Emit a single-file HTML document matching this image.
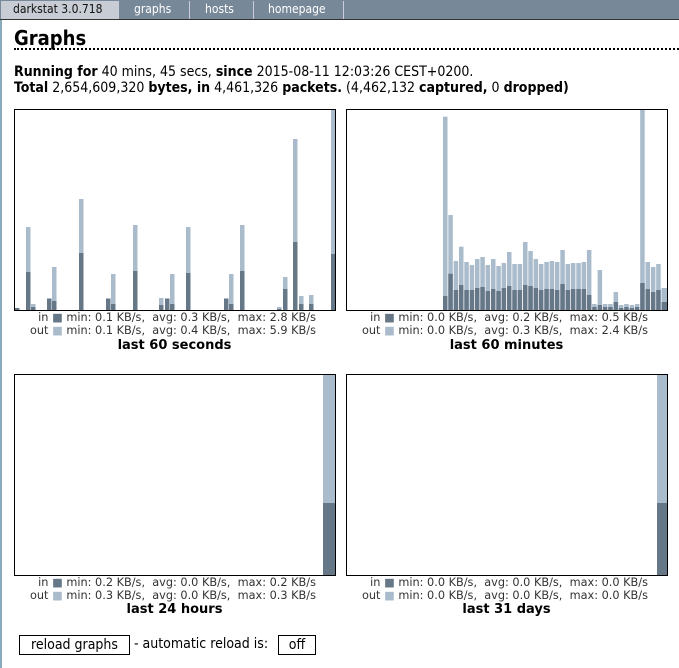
<!DOCTYPE html>
<html><head><meta charset="utf-8"><style>
body{margin:0;width:679px;height:668px;background:#fff;position:relative;overflow:hidden;font-family:"DejaVu Sans Condensed","DejaVu Sans","Liberation Sans",sans-serif;color:#000}
.nav{position:absolute;left:0;top:0;width:679px;height:19px;background:#778899;border-bottom:1px solid #333}
.nav span{position:absolute;top:2px;font-size:12px;color:#fff}
.sep{position:absolute;top:1px;width:1px;height:18px;background:#ccd}
.t{position:absolute;white-space:nowrap}
h1{position:absolute;left:14px;top:26px;margin:0;font-size:20px;font-weight:bold}
.dot{position:absolute;left:14px;top:48px;width:665px;border-top:2px dotted #000}
.leg{font-family:"DejaVu Sans","Liberation Sans",sans-serif;font-size:11.3px;color:#333;text-align:right}
.cap{font-family:"DejaVu Sans",sans-serif;font-size:13px;font-weight:bold;text-align:center;width:321px}
.btn{position:absolute;border:1px solid #000;font-size:14px;text-align:center;height:18px;line-height:18px}
</style></head><body>
<div style="position:absolute;left:0;top:0;width:2px;height:668px;background:#8ab"></div>
<div class="nav">
<div style="position:absolute;left:1px;top:1px;width:117px;height:18px;background:#c8ccd4"></div>
<span style="left:13px;color:#111">darkstat 3.0.718</span>
<div class="sep" style="left:118px"></div>
<span style="left:134px">graphs</span>
<div class="sep" style="left:189px"></div>
<span style="left:205px">hosts</span>
<div class="sep" style="left:253px"></div>
<span style="left:268px">homepage</span>
<div class="sep" style="left:343px"></div>
</div>
<h1>Graphs</h1>
<div class="dot"></div>
<div class="t" style="left:14px;top:64px;font-size:14px"><b>Running for</b> 40 mins, 45 secs, <b>since</b> 2015-08-11 12:03:26 CEST+0200.</div>
<div class="t" style="left:14px;top:80px;font-size:14px"><b>Total</b> 2,654,609,320 <b>bytes, in</b> 4,461,326 <b>packets.</b> (4,462,132 <b>captured,</b> 0 <b>dropped)</b></div>

<svg style="position:absolute;left:0;top:0" width="679" height="668">
<g fill="#aabbcc">
<rect x="26" y="227" width="4.5" height="83"/><rect x="31" y="304" width="4.5" height="6"/><rect x="47" y="298" width="4.5" height="12"/><rect x="52" y="267" width="4.5" height="43"/><rect x="79" y="199" width="4.5" height="111"/><rect x="106" y="298" width="4.5" height="12"/><rect x="111" y="274" width="4.5" height="36"/><rect x="133" y="225" width="4.5" height="85"/><rect x="159" y="298" width="4.5" height="12"/><rect x="165" y="298" width="4.5" height="12"/><rect x="170" y="274" width="4.5" height="36"/><rect x="186" y="227" width="4.5" height="83"/><rect x="224" y="298" width="4.5" height="12"/><rect x="229" y="274" width="4.5" height="36"/><rect x="240" y="225" width="4.5" height="85"/><rect x="277" y="307" width="4.5" height="3"/><rect x="283" y="277" width="4.5" height="33"/><rect x="293" y="139" width="4.5" height="171"/><rect x="299" y="296" width="4.5" height="14"/><rect x="309" y="295" width="4.5" height="15"/><rect x="331" y="110" width="4" height="200"/>
<rect x="443" y="116.7" width="4.5" height="193.3"/><rect x="448.3" y="215" width="4.5" height="95"/><rect x="453.7" y="261" width="4.5" height="49"/><rect x="459" y="246.7" width="4.5" height="63.3"/><rect x="464.3" y="262" width="4.5" height="48"/><rect x="469.7" y="265" width="4.5" height="45"/><rect x="475" y="259" width="4.5" height="51"/><rect x="480.3" y="257" width="4.5" height="53"/><rect x="485.6" y="265" width="4.5" height="45"/><rect x="491" y="259" width="4.5" height="51"/><rect x="496.3" y="266" width="4.5" height="44"/><rect x="501.6" y="263" width="4.5" height="47"/><rect x="507" y="252" width="4.5" height="58"/><rect x="512.3" y="264" width="4.5" height="46"/><rect x="517.6" y="264" width="4.5" height="46"/><rect x="523" y="242" width="4.5" height="68"/><rect x="528.3" y="251" width="4.5" height="59"/><rect x="533.6" y="259" width="4.5" height="51"/><rect x="538.9" y="264" width="4.5" height="46"/><rect x="544.3" y="262" width="4.5" height="48"/><rect x="549.6" y="261" width="4.5" height="49"/><rect x="554.9" y="262" width="4.5" height="48"/><rect x="560.3" y="250" width="4.5" height="60"/><rect x="565.6" y="264" width="4.5" height="46"/><rect x="570.9" y="263" width="4.5" height="47"/><rect x="576.3" y="263" width="4.5" height="47"/><rect x="581.6" y="262" width="4.5" height="48"/><rect x="586.9" y="250" width="4.5" height="60"/><rect x="592.2" y="304" width="4.5" height="6"/><rect x="597.6" y="270" width="4.5" height="40"/><rect x="602.9" y="304" width="4.5" height="6"/><rect x="608.2" y="304" width="4.5" height="6"/><rect x="613.6" y="292" width="4.5" height="18"/><rect x="618.9" y="305" width="4.5" height="5"/><rect x="624.2" y="304" width="4.5" height="6"/><rect x="629.6" y="305" width="4.5" height="5"/><rect x="634.9" y="304" width="4.5" height="6"/><rect x="640.2" y="109" width="4.5" height="201"/><rect x="645.5" y="262" width="4.5" height="48"/><rect x="650.9" y="267" width="4.5" height="43"/><rect x="656.2" y="264" width="4.5" height="46"/><rect x="661.5" y="288" width="5.5" height="22"/>
<rect x="323" y="375" width="12" height="200"/><rect x="657" y="375" width="10" height="200"/>
</g>
<g fill="#667788">
<rect x="15" y="308" width="4.5" height="2"/><rect x="26" y="272" width="4.5" height="38"/><rect x="31" y="307" width="4.5" height="3"/><rect x="47" y="299" width="4.5" height="11"/><rect x="52" y="301" width="4.5" height="9"/><rect x="79" y="253" width="4.5" height="57"/><rect x="106" y="299" width="4.5" height="11"/><rect x="111" y="304" width="4.5" height="6"/><rect x="133" y="271" width="4.5" height="39"/><rect x="159" y="305" width="4.5" height="5"/><rect x="165" y="299" width="4.5" height="11"/><rect x="170" y="304" width="4.5" height="6"/><rect x="186" y="273" width="4.5" height="37"/><rect x="224" y="299" width="4.5" height="11"/><rect x="229" y="304" width="4.5" height="6"/><rect x="240" y="271" width="4.5" height="39"/><rect x="277" y="309" width="4.5" height="1"/><rect x="283" y="289" width="4.5" height="21"/><rect x="293" y="242" width="4.5" height="68"/><rect x="299" y="304" width="4.5" height="6"/><rect x="309" y="304" width="4.5" height="6"/><rect x="331" y="254" width="4" height="56"/>
<rect x="443" y="296" width="4.5" height="14"/><rect x="448.3" y="273.7" width="4.5" height="36.3"/><rect x="453.7" y="290" width="4.5" height="20"/><rect x="459" y="285" width="4.5" height="25"/><rect x="464.3" y="290" width="4.5" height="20"/><rect x="469.7" y="290" width="4.5" height="20"/><rect x="475" y="288" width="4.5" height="22"/><rect x="480.3" y="287" width="4.5" height="23"/><rect x="485.6" y="291" width="4.5" height="19"/><rect x="491" y="289" width="4.5" height="21"/><rect x="496.3" y="291" width="4.5" height="19"/><rect x="501.6" y="288" width="4.5" height="22"/><rect x="507" y="286" width="4.5" height="24"/><rect x="512.3" y="290" width="4.5" height="20"/><rect x="517.6" y="290" width="4.5" height="20"/><rect x="523" y="285" width="4.5" height="25"/><rect x="528.3" y="286" width="4.5" height="24"/><rect x="533.6" y="288" width="4.5" height="22"/><rect x="538.9" y="290" width="4.5" height="20"/><rect x="544.3" y="289" width="4.5" height="21"/><rect x="549.6" y="289" width="4.5" height="21"/><rect x="554.9" y="290" width="4.5" height="20"/><rect x="560.3" y="284" width="4.5" height="26"/><rect x="565.6" y="290" width="4.5" height="20"/><rect x="570.9" y="289" width="4.5" height="21"/><rect x="576.3" y="289" width="4.5" height="21"/><rect x="581.6" y="289" width="4.5" height="21"/><rect x="586.9" y="295" width="4.5" height="15"/><rect x="592.2" y="307" width="4.5" height="3"/><rect x="597.6" y="305" width="4.5" height="5"/><rect x="602.9" y="307" width="4.5" height="3"/><rect x="608.2" y="307" width="4.5" height="3"/><rect x="613.6" y="302" width="4.5" height="8"/><rect x="618.9" y="308" width="4.5" height="2"/><rect x="624.2" y="307" width="4.5" height="3"/><rect x="629.6" y="308" width="4.5" height="2"/><rect x="634.9" y="307" width="4.5" height="3"/><rect x="640.2" y="283" width="4.5" height="27"/><rect x="645.5" y="289" width="4.5" height="21"/><rect x="650.9" y="292" width="4.5" height="18"/><rect x="656.2" y="290" width="4.5" height="20"/><rect x="661.5" y="302" width="5.5" height="8"/>
<rect x="323" y="503" width="12" height="72"/><rect x="657" y="503" width="10" height="72"/>
</g>
<g fill="none" stroke="#000" stroke-width="1">
<rect x="14.5" y="109.5" width="321" height="201"/>
<rect x="346.5" y="109.5" width="321" height="201"/>
<rect x="14.5" y="374.5" width="321" height="201"/>
<rect x="346.5" y="374.5" width="321" height="201"/>
</g>
</svg>

<div class="t leg" style="left:14px;top:311px;width:302px">in <span style="color:#667788">■</span> min: 0.1 KB/s,&nbsp; avg: 0.3 KB/s,&nbsp; max: 2.8 KB/s</div>
<div class="t leg" style="left:14px;top:324px;width:302px">out <span style="color:#aabbcc">■</span> min: 0.1 KB/s,&nbsp; avg: 0.4 KB/s,&nbsp; max: 5.9 KB/s</div>
<div class="t cap" style="left:14px;top:338px">last 60 seconds</div>
<div class="t leg" style="left:346px;top:311px;width:302px">in <span style="color:#667788">■</span> min: 0.0 KB/s,&nbsp; avg: 0.2 KB/s,&nbsp; max: 0.5 KB/s</div>
<div class="t leg" style="left:346px;top:324px;width:302px">out <span style="color:#aabbcc">■</span> min: 0.0 KB/s,&nbsp; avg: 0.3 KB/s,&nbsp; max: 2.4 KB/s</div>
<div class="t cap" style="left:346px;top:338px">last 60 minutes</div>
<div class="t leg" style="left:14px;top:576px;width:302px">in <span style="color:#667788">■</span> min: 0.2 KB/s,&nbsp; avg: 0.0 KB/s,&nbsp; max: 0.2 KB/s</div>
<div class="t leg" style="left:14px;top:589px;width:302px">out <span style="color:#aabbcc">■</span> min: 0.3 KB/s,&nbsp; avg: 0.0 KB/s,&nbsp; max: 0.3 KB/s</div>
<div class="t cap" style="left:14px;top:602px">last 24 hours</div>
<div class="t leg" style="left:346px;top:576px;width:302px">in <span style="color:#667788">■</span> min: 0.0 KB/s,&nbsp; avg: 0.0 KB/s,&nbsp; max: 0.0 KB/s</div>
<div class="t leg" style="left:346px;top:589px;width:302px">out <span style="color:#aabbcc">■</span> min: 0.0 KB/s,&nbsp; avg: 0.0 KB/s,&nbsp; max: 0.0 KB/s</div>
<div class="t cap" style="left:346px;top:602px">last 31 days</div>

<div class="btn" style="left:19px;top:635px;width:109px">reload graphs</div>
<div class="t" style="left:134px;top:636px;font-size:14px">- automatic reload is:</div>
<div class="btn" style="left:278px;top:635px;width:36px">off</div>
</body></html>
